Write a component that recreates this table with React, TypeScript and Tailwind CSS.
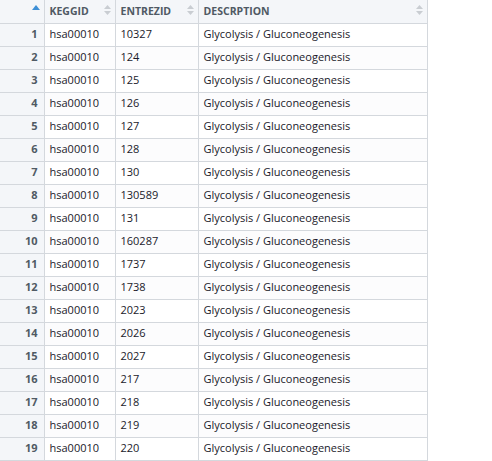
const ids = ["10327", "124", "125", "126", "127", "128", "130", "130589", "131", "160287", "1737", "1738", "2023", "2026", "2027", "217", "218", "219", "220"];

function SortIcon({ active }: { active?: boolean }) {
  if (active) {
    return (
      <svg width="8" height="6" viewBox="0 0 8 6" className="absolute right-[4px] top-[5px]">
        <path d="M0 5 L4 0 L8 5 Z" fill="#3d8fd6" />
      </svg>
    );
  }
  return (
    <svg width="7" height="11" viewBox="0 0 7 11" className="absolute right-[4px] top-[5px]">
      <path d="M0 4 L3.5 0 L7 4 Z" fill="#c9cdd2" />
      <path d="M0 6 L3.5 10 L7 6 Z" fill="#c9cdd2" />
    </svg>
  );
}

export default function App() {
  return (
    <div className="w-[492px] h-[461px] bg-white overflow-hidden" style={{ fontFamily: '"Open Sans", "Noto Sans", sans-serif' }}>
      <table className="border-collapse text-[11px] text-[#1a1a2a] table-fixed w-[427px]">
        <colgroup>
          <col className="w-[44px]" />
          <col className="w-[71px]" />
          <col className="w-[83px]" />
          <col className="w-[229px]" />
        </colgroup>
        <thead>
          <tr className="h-[23px] bg-[#f4f6f9]">
            <th className="relative border-r border-b border-[#d4d8dd] p-0">
              <SortIcon active />
            </th>
            {["KEGGID", "ENTREZID", "DESCRPTION"].map((h) => (
              <th key={h} className="relative border-r border-b border-[#d4d8dd] text-left font-bold text-[10.5px] text-[#505a64] pl-[5px] pt-[1px]">
                {h}
                <SortIcon />
              </th>
            ))}
          </tr>
        </thead>
        <tbody>
          {ids.map((id, i) => (
            <tr key={id} className={`h-[23px] ${i % 2 === 1 ? "bg-[#fcfcfd]" : "bg-white"}`}>
              <td className="bg-[#f4f6f9] border-r border-b border-[#d4d8dd] text-right pr-[6px] font-bold text-[11px] text-[#505a64]">{i + 1}</td>
              <td className="border-r border-b border-[#d4d8dd] pl-[5px]">hsa00010</td>
              <td className="border-r border-b border-[#d4d8dd] pl-[5px]">{id}</td>
              <td className="border-r border-b border-[#d4d8dd] pl-[5px]">Glycolysis / Gluconeogenesis</td>
            </tr>
          ))}
        </tbody>
      </table>
    </div>
  );
}
